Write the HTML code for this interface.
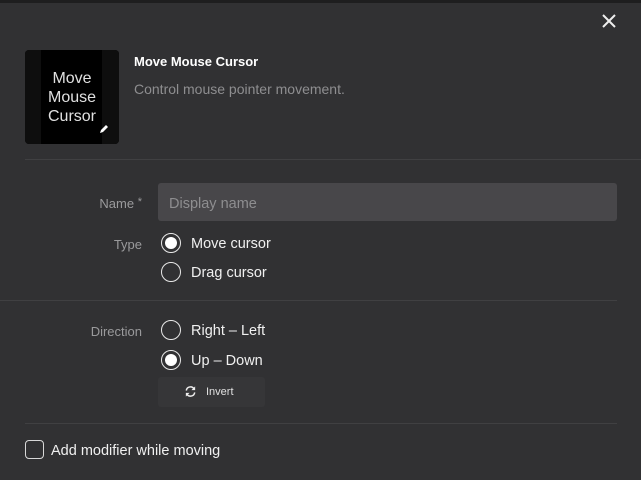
<!DOCTYPE html>
<html><head><style>
*{margin:0;padding:0;box-sizing:border-box}
body{width:641px;height:480px;background:#313133;font-family:"Liberation Sans",sans-serif;position:relative;overflow:hidden;color:#e8e8e8}
.a{position:absolute;white-space:nowrap}
.hr{position:absolute;height:1px;background:#404042}
.radio{position:absolute;width:20px;height:20px;border:1.5px solid #e8e8e8;border-radius:50%}
.radio.on::after{content:"";position:absolute;left:2.5px;top:2.5px;width:12px;height:12px;border-radius:50%;background:#fff}
.lbl{font-size:13px;color:#9a9a9c;text-align:right;width:142px;left:0}
.opt{font-size:14.5px;color:#f0f0f0}
</style></head><body>
<div class="a" style="left:0;top:0;width:641px;height:3px;background:#1e1e1f"></div>
<svg class="a" style="left:601px;top:13px" width="16" height="16" viewBox="0 0 16 16"><path d="M2 2L14 14M14 2L2 14" stroke="#eee" stroke-width="2"/></svg>
<div class="a" style="left:25px;top:50px;width:94px;height:94px;background:#000;border-radius:4px;overflow:hidden">
<div class="a" style="left:0;top:0;width:16px;height:94px;background:#0e0e0e"></div>
<div class="a" style="left:77px;top:0;width:17px;height:94px;background:#0e0e0e"></div>
<div class="a" style="left:0;top:19px;width:94px;text-align:center;font-size:16px;line-height:19px;color:#e0e0e0">Move<br>Mouse<br>Cursor</div>
<svg class="a" style="left:73px;top:73px" width="12" height="12" viewBox="0 0 12 12"><path d="M2 10L3 7L8 2L10 4L5 9Z" fill="#fff"/></svg>
</div>
<div class="a" style="left:134px;top:54px;font-size:13px;font-weight:bold;color:#fff">Move Mouse Cursor</div>
<div class="a" style="left:134px;top:81px;font-size:14px;color:#8e8e90">Control mouse pointer movement.</div>
<div class="hr" style="left:25px;top:159px;width:616px"></div>
<div class="a lbl" style="top:196px">Name <span style="font-size:11px;vertical-align:top">*</span></div>
<div class="a" style="left:158px;top:183px;width:459px;height:38px;background:#48474a;border-radius:3px"></div>
<div class="a" style="left:169px;top:196px;font-size:14.5px;color:#8e8e90">Display name</div>
<div class="a lbl" style="top:237px">Type</div>
<div class="radio on" style="left:161px;top:233px"></div>
<div class="a opt" style="left:191px;top:236px">Move cursor</div>
<div class="radio" style="left:161px;top:262px"></div>
<div class="a opt" style="left:191px;top:265px">Drag cursor</div>
<div class="hr" style="left:0;top:300px;width:617px"></div>
<div class="a lbl" style="top:324px">Direction</div>
<div class="radio" style="left:161px;top:320px"></div>
<div class="a opt" style="left:191px;top:323px">Right – Left</div>
<div class="radio on" style="left:161px;top:350px"></div>
<div class="a opt" style="left:191px;top:353px">Up – Down</div>
<div class="a" style="left:158px;top:377px;width:107px;height:30px;background:#363638;border-radius:3px"></div>
<svg class="a" style="left:184px;top:385px" width="13" height="13" viewBox="0 0 14 14"><path d="M2.5 6A4.5 4.5 0 0 1 11 4.5M11.5 8A4.5 4.5 0 0 1 3 9.5" fill="none" stroke="#eee" stroke-width="1.6"/><path d="M12 1.5V5.5H8Z M2 12.5V8.5H6Z" fill="#eee"/></svg>
<div class="a" style="left:206px;top:386px;font-size:11px;color:#e0e0e0">Invert</div>
<div class="hr" style="left:25px;top:423px;width:592px"></div>
<div class="a" style="left:25px;top:440px;width:19px;height:19px;border:1.5px solid #d8d8d8;border-radius:4px"></div>
<div class="a" style="left:51px;top:443px;font-size:14.5px;color:#f0f0f0">Add modifier while moving</div>
</body></html>
